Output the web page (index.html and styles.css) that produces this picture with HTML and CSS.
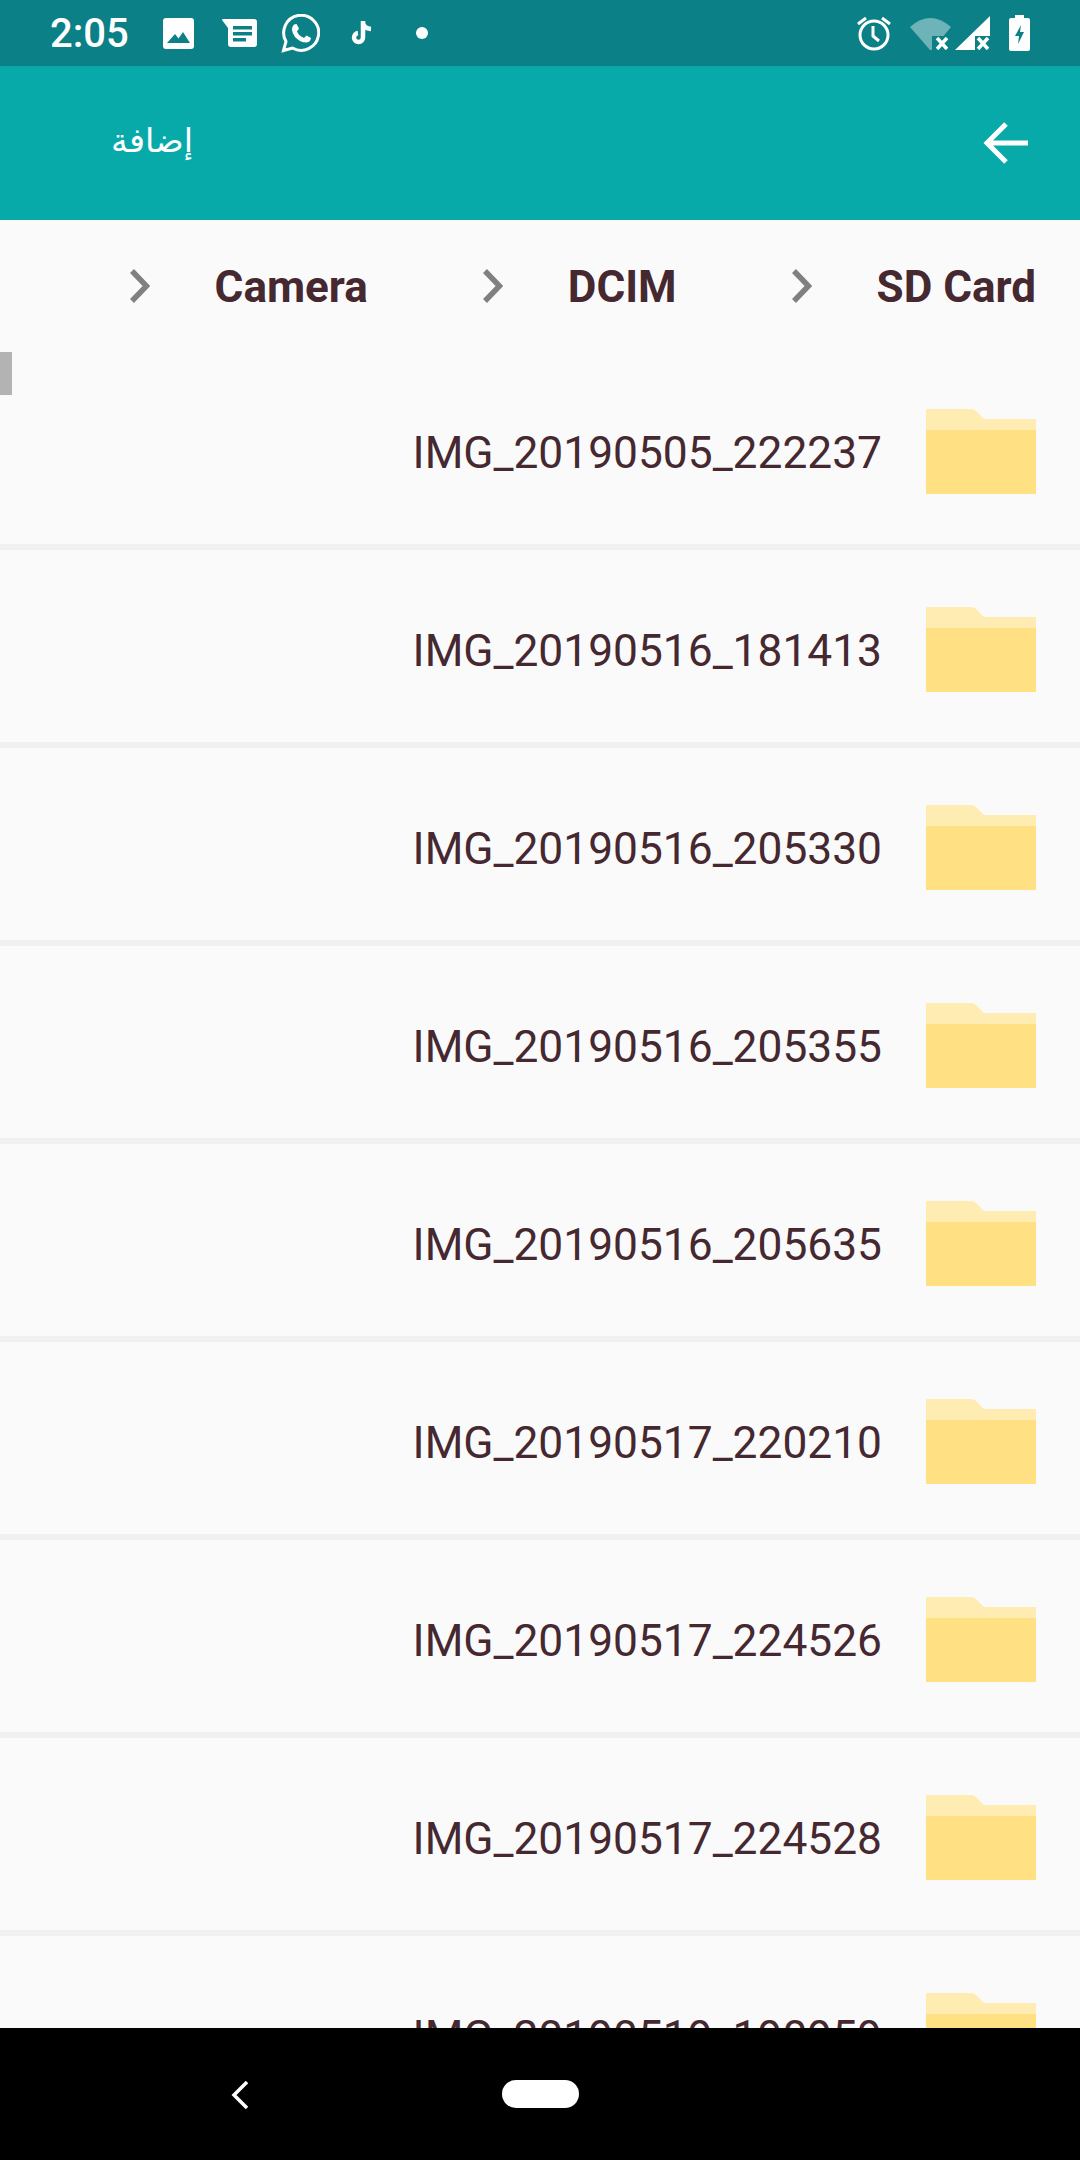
FILE: index.html
```html
<!DOCTYPE html>
<html lang="ar">
<head>
<meta charset="utf-8">
<title>إضافة</title>
<link rel="stylesheet" href="styles.css">
</head>
<body>
<svg class="defs" width="0" height="0" aria-hidden="true">
  <symbol id="folder" viewBox="0 0 110 85">
    <path fill="#ffecb3" d="M0 0H45Q48 0 50 2L58 10H110V21H0Z"/>
    <rect y="21" width="110" height="64" fill="#ffe082"/>
  </symbol>
  <symbol id="crumb" viewBox="0 0 21 34">
    <path d="M3 2L17.500 17L3 32" fill="none" stroke="#808080" stroke-width="5.500"/>
  </symbol>
</svg>
<div class="page">
  <header class="status">
    <div class="status-left">
      <span class="time">2:05</span>
      <svg class="ic-img" viewBox="0 0 31 31"><path fill="#fff" fill-rule="evenodd" d="M3 0H28Q31 0 31 3V28Q31 31 28 31H3Q0 31 0 28V3Q0 0 3 0ZM4 25H27L20 14L15.500 20.500L12 16Z"/></svg>
      <svg class="ic-msg" viewBox="0 0 35 28"><path fill="#fff" fill-rule="evenodd" d="M0 1Q0 0 1 0H32Q35 0 35 3V25Q35 28 32 28H9Q6 28 6 25V9ZM11 7V10.500H30V7ZM11 13V16.500H30V13ZM11 19V22.500H24V19Z"/></svg>
      <svg class="ic-wa" viewBox="0 0 39 39"><path fill="none" stroke="#fff" stroke-width="3" d="M2.500 36.500L5 27.500A17.500 17.500 0 1 1 11.500 34Z"/><path fill="#fff" d="M13 10.500L15.500 10L18 14.500L16 17.500Q18 22 23 24L25.500 21.500L30 24Q29.500 28 25.500 28.500Q19 28.500 14 23Q8.500 15 13 10.500Z"/></svg>
      <svg class="ic-tt" viewBox="0 0 22 24"><path fill="none" stroke="#fff" stroke-width="4.500" d="M12 0V16.500A4.500 4.500 0 1 1 7 12M12 2Q13 7.500 20 8"/></svg>
      <span class="dot"></span>
    </div>
    <div class="status-right">
      <svg class="ic-alarm" viewBox="0 0 34 35"><circle cx="17" cy="19" r="14" fill="none" stroke="#fff" stroke-width="3"/><path fill="none" stroke="#fff" stroke-width="3" d="M16 10V20L22 25M1 8L9 2M33 8L25 2"/></svg>
      <svg class="ic-wifi" viewBox="0 0 41 34"><path fill="#fff" fill-opacity=".4" d="M0 11Q20 -7 41 11L22 34H20Z"/><rect x="22" y="20" width="19" height="14" fill="#0c8087"/><path stroke="#fff" stroke-width="3.500" d="M27 22L37 33M37 22L27 33"/></svg>
      <svg class="ic-sig" viewBox="0 0 35 34"><path fill="#fff" d="M0 34L35 0V34Z"/><rect x="20" y="20" width="15" height="14" fill="#0c8087"/><path stroke="#fff" stroke-width="3.500" d="M23 22L33 33M33 22L23 33"/></svg>
      <svg class="ic-bat" viewBox="0 0 21 36"><path fill="#fff" d="M6 0H15V3H19Q21 3 21 5V34Q21 36 19 36H2Q0 36 0 34V5Q0 3 2 3H6Z"/><path fill="#0c8087" d="M12 10L6 21H10L9 29L15 17H11Z"/></svg>
    </div>
  </header>
  <div class="appbar">
    <span class="title">إضافة</span>
    <svg class="ic-back" viewBox="0 0 46 42"><path fill="none" stroke="#fff" stroke-width="5" d="M46 21H5M24 2L5 21L24 40"/></svg>
  </div>
  <main class="content">
    <span class="scroll-thumb"></span>
    <nav class="crumbs">
      <div class="crumb"><svg class="chev"><use href="#crumb"/></svg><span class="crumb-label">Camera</span></div>
      <div class="crumb"><svg class="chev"><use href="#crumb"/></svg><span class="crumb-label">DCIM</span></div>
      <div class="crumb"><svg class="chev"><use href="#crumb"/></svg><span class="crumb-label">SD Card</span></div>
    </nav>
    <ul class="list">
      <li class="row"><span class="row-label">IMG_20190505_222237</span><svg class="folder"><use href="#folder"/></svg></li>
      <li class="row"><span class="row-label">IMG_20190516_181413</span><svg class="folder"><use href="#folder"/></svg></li>
      <li class="row"><span class="row-label">IMG_20190516_205330</span><svg class="folder"><use href="#folder"/></svg></li>
      <li class="row"><span class="row-label">IMG_20190516_205355</span><svg class="folder"><use href="#folder"/></svg></li>
      <li class="row"><span class="row-label">IMG_20190516_205635</span><svg class="folder"><use href="#folder"/></svg></li>
      <li class="row"><span class="row-label">IMG_20190517_220210</span><svg class="folder"><use href="#folder"/></svg></li>
      <li class="row"><span class="row-label">IMG_20190517_224526</span><svg class="folder"><use href="#folder"/></svg></li>
      <li class="row"><span class="row-label">IMG_20190517_224528</span><svg class="folder"><use href="#folder"/></svg></li>
      <li class="row"><span class="row-label">IMG_20190519_190959</span><svg class="folder"><use href="#folder"/></svg></li>
    </ul>
  </main>
  <footer class="navbar">
    <svg class="ic-navback" viewBox="0 0 17 28"><path fill="none" stroke="#fff" stroke-width="3.500" d="M16 1L3 14L16 27"/></svg>
    <span class="pill"></span>
  </footer>
</div>
</body>
</html>
```

FILE: styles.css
```css
* { box-sizing: border-box; }
html, body { margin: 0; padding: 0; }
body { font-family: Roboto, "Liberation Sans", sans-serif; background: #fafafa; }
.defs { position: absolute; }
.page { width: 1080px; height: 2160px; display: flex; flex-direction: column; overflow: hidden; }

.status { flex: 0 0 66px; background: #0c8087; display: flex; justify-content: space-between; align-items: center; padding: 0 50px 0 50px; }
.status-left, .status-right { display: flex; align-items: center; }
.time { color: #fff; font-size: 40px; font-weight: 500; width: 113px; }
.ic-img { width: 31px; height: 31px; margin-right: 28px; }
.ic-msg { width: 35px; height: 28px; margin-right: 24px; }
.ic-wa { width: 39px; height: 39px; margin-right: 31px; }
.ic-tt { width: 22px; height: 24px; margin-right: 43px; }
.dot { width: 12px; height: 12px; border-radius: 50%; background: #fff; }
.ic-alarm { width: 34px; height: 35px; margin-right: 19px; }
.ic-wifi { width: 41px; height: 34px; margin-right: 4px; }
.ic-sig { width: 35px; height: 34px; margin-right: 19px; }
.ic-bat { width: 21px; height: 36px; }

.appbar { flex: 0 0 154px; background: #08aaa9; display: flex; justify-content: space-between; align-items: center; padding: 0 52px 6px 111px; }
.title { color: #fff; font-size: 33.500px; font-family: "DejaVu Sans", sans-serif; }
.ic-back { width: 46px; height: 42px; margin-top: 6px; }

.content { flex: 1; min-height: 0; position: relative; overflow: hidden; }
.scroll-thumb { position: absolute; left: 0; top: 132px; width: 12px; height: 43px; background: #b3b3b3; }
.crumbs { height: 132px; display: flex; justify-content: flex-end; align-items: center; gap: 114px; padding-right: 44px; }
.crumb { display: flex; align-items: center; gap: 65px; color: #452830; font-size: 44px; font-weight: 700; }
.crumb-label { padding-top: 2px; }
.chev { width: 21px; height: 34px; }

.list { list-style: none; margin: 0; padding: 0; }
.row { height: 198px; border-bottom: 6px solid #f0f0f0; padding: 6px 44px 0 0; display: flex; justify-content: flex-end; align-items: center; gap: 44px; color: #452830; font-size: 44.300px; }
.row-label { padding-top: 3px; }
.folder { width: 110px; height: 85px; }

.navbar { flex: 0 0 132px; background: #000; position: relative; }
.ic-navback { position: absolute; left: 231px; top: 53px; width: 17px; height: 28px; }
.pill { position: absolute; left: 502px; top: 52px; width: 77px; height: 28px; border-radius: 14px; background: #fff; }
```
